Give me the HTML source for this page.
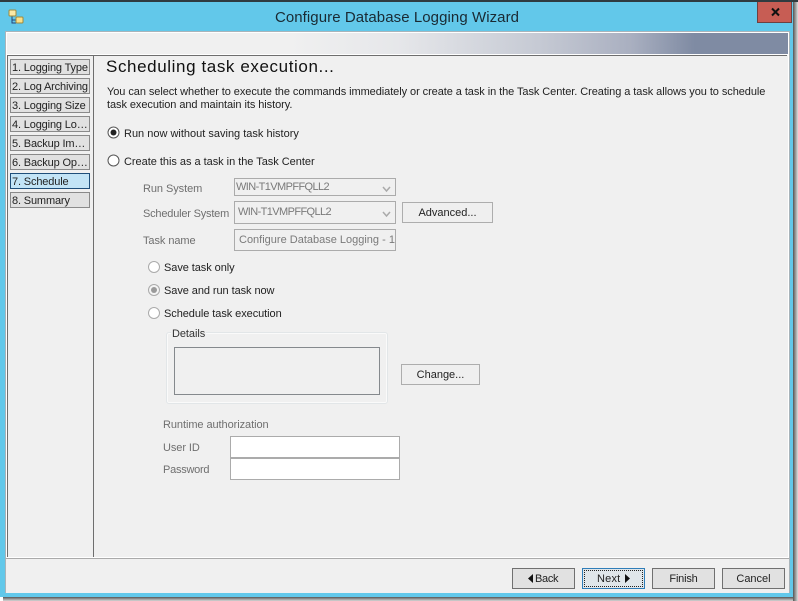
<!DOCTYPE html>
<html><head><meta charset="utf-8"><style>
html,body{margin:0;padding:0;width:798px;height:601px;overflow:hidden;background:#fff}
*{box-sizing:border-box}
body{font-family:"Liberation Sans",sans-serif;font-size:11px;color:#111;position:relative}
div,span.t{position:absolute;white-space:nowrap}
.t{line-height:14px;height:14px;letter-spacing:-.07px}
.g{color:#6f6f6f}
.nav{left:10px;width:80px;height:16px;background:#e1e1e1;border:1px solid #8a8a8a;line-height:16px;padding-left:1px;color:#222;overflow:hidden;letter-spacing:-.15px}
.inp{border:1px solid #ababab;background:#f0f0f0;color:#7a7a7a;line-height:16px;padding-left:2px;letter-spacing:-.6px}
.btn{background:#efefef;border:1px solid #adadad;text-align:center;color:#222}
.bb{top:568px;width:63px;height:21px;background:#e1e1e1;border:1px solid #707070;line-height:20px;text-align:center;color:#222}
svg{position:absolute;overflow:visible}
</style></head><body>
<div style="left:0;top:0;width:798px;height:597px;background:#62c8ea"></div>
<div style="left:0;top:0;width:798px;height:2px;background:#2f3b40"></div>
<div style="left:3px;top:597px;width:795px;height:4px;background:linear-gradient(#555,#ccc 90%)"></div>
<div style="left:793px;top:2px;width:5px;height:599px;background:linear-gradient(90deg,#555,#ddd)"></div>
<svg style="left:8px;top:9px" width="16" height="16" viewBox="0 0 16 16"><path d="M4 6V14H8M4 11H8" stroke="#26457a" fill="none"/><rect x="1" y="1" width="7" height="6" rx="1" fill="#fbe9a6" stroke="#a08a3c"/><rect x="8" y="8" width="7" height="6" rx="1" fill="#fbe08a" stroke="#a08a3c"/></svg>
<div style="left:0;top:9px;width:794px;text-align:center;font-size:15px;line-height:18px;color:#1a2a33;letter-spacing:.07px">Configure Database Logging Wizard</div>
<div style="left:757px;top:2px;width:35px;height:21px;background:#c75d54;border:1px solid #6e4040;border-top:0;text-align:center"><svg style="left:13px;top:6px" width="9" height="8" viewBox="0 0 9 8"><path d="M1 0.5L8 7.5M8 0.5L1 7.5" stroke="#111" stroke-width="2"/></svg></div>

<div style="left:5px;top:31px;width:785px;height:562px;background:#f0f0f0;border:1px solid #a9b4ba;border-bottom:0;border-right:0"></div>
<div style="left:6px;top:32px;width:783px;height:1px;background:#fff"></div>
<div style="left:6px;top:32px;width:1px;height:525px;background:#fff"></div>
<div style="left:788px;top:32px;width:1px;height:526px;background:#fff"></div>
<div style="left:789px;top:31px;width:1px;height:562px;background:#a9b4ba"></div>
<div style="left:7px;top:33px;width:781px;height:21px;background:linear-gradient(90deg,#f0f0f0 0,#f0f0f0 36%,#e6e7ea 50%,#c6cad4 68%,#a9afc0 80%,#7f8ba3 88%,#7f8ba3 100%)"></div>
<div style="left:7px;top:54px;width:781px;height:1px;background:#fff"></div>
<div style="left:7px;top:55px;width:780px;height:1px;background:#6e6e6e"></div>
<div style="left:7px;top:55px;width:1px;height:502px;background:#6e6e6e"></div>
<div style="left:93px;top:55px;width:1px;height:502px;background:#6e6e6e"></div>
<div style="left:6px;top:557px;width:783px;height:1px;background:#fff"></div>
<div style="left:6px;top:558px;width:783px;height:1px;background:#aaa"></div>

<div class="nav" style="top:59px">1. Logging Type</div>
<div class="nav" style="top:78px">2. Log Archiving</div>
<div class="nav" style="top:97px">3. Logging Size</div>
<div class="nav" style="top:116px">4. Logging Lo…</div>
<div class="nav" style="top:135px">5. Backup Im…</div>
<div class="nav" style="top:154px">6. Backup Op…</div>
<div class="nav" style="top:173px;background:#c3e4f6;border:1px solid #1f4e79">7. Schedule</div>
<div class="nav" style="top:192px">8. Summary</div>

<div style="left:106px;top:57px;font-size:17px;line-height:20px;color:#111;letter-spacing:.6px">Scheduling task execution...</div>
<div class="t" style="left:107px;top:85px;color:#222">You can select whether to execute the commands immediately or create a task in the Task Center. Creating a task allows you to schedule</div>
<div class="t" style="left:107px;top:98px;color:#222">task execution and maintain its history.</div>

<svg style="left:107px;top:126px" width="14" height="14"><circle cx="6.5" cy="6.5" r="5.5" fill="#fff" stroke="#555"/><circle cx="6.5" cy="6.5" r="3" fill="#222"/></svg>
<div class="t" style="left:124px;top:127px;color:#222;letter-spacing:0">Run now without saving task history</div>
<svg style="left:107px;top:154px" width="14" height="14"><circle cx="6.5" cy="6.5" r="5.5" fill="#fff" stroke="#555"/></svg>
<div class="t" style="left:124px;top:155px;color:#222;letter-spacing:-.03px">Create this as a task in the Task Center</div>

<div class="t g" style="left:143px;top:182px">Run System</div>
<div class="inp" style="left:234px;top:178px;width:162px;height:18px;line-height:17px;padding-left:1px">WIN-T1VMPFFQLL2</div>
<svg style="left:382px;top:186px" width="9" height="6"><path d="M1 1L4.5 5L8 1" stroke="#aaa" stroke-width="1.5" fill="none"/></svg>
<div class="t g" style="left:143px;top:207px;letter-spacing:-.2px">Scheduler System</div>
<div class="inp" style="left:234px;top:201px;width:162px;height:23px;line-height:21px;padding-left:3px">WIN-T1VMPFFQLL2</div>
<svg style="left:382px;top:211px" width="9" height="6"><path d="M1 1L4.5 5L8 1" stroke="#aaa" stroke-width="1.5" fill="none"/></svg>
<div class="btn" style="left:402px;top:202px;width:91px;height:21px;line-height:20px">Advanced...</div>
<div class="t g" style="left:143px;top:234px">Task name</div>
<div class="inp" style="left:234px;top:229px;width:162px;height:22px;line-height:21px;padding-left:4px;overflow:hidden;letter-spacing:0">Configure Database Logging - 1</div>

<svg style="left:148px;top:261px" width="13" height="13"><circle cx="6" cy="6" r="5.5" fill="#fff" stroke="#aaa"/></svg>
<div class="t" style="left:164px;top:261px;color:#222">Save task only</div>
<svg style="left:148px;top:284px" width="13" height="13"><circle cx="6" cy="6" r="5.5" fill="#f4f4f4" stroke="#aaa"/><circle cx="6" cy="6" r="3" fill="#9a9a9a"/></svg>
<div class="t" style="left:164px;top:284px;color:#222">Save and run task now</div>
<svg style="left:148px;top:307px" width="13" height="13"><circle cx="6" cy="6" r="5.5" fill="#fff" stroke="#aaa"/></svg>
<div class="t" style="left:164px;top:307px;color:#222">Schedule task execution</div>

<div style="left:166px;top:332px;width:222px;height:72px;border:1px solid #e2e6e8;border-radius:3px;box-shadow:0 0 0 1px #fafafa inset"></div>
<div class="t" style="left:171px;top:327px;background:#f0f0f0;padding:0 1px;color:#333">Details</div>
<div style="left:174px;top:347px;width:206px;height:48px;border:1px solid #85898d"></div>
<div class="btn" style="left:401px;top:364px;width:79px;height:21px;line-height:20px">Change...</div>

<div class="t g" style="left:163px;top:418px">Runtime authorization</div>
<div class="t g" style="left:163px;top:441px">User ID</div>
<div style="left:230px;top:436px;width:170px;height:22px;background:#fff;border:1px solid #ababab"></div>
<div class="t g" style="left:163px;top:463px;letter-spacing:-.25px">Password</div>
<div style="left:230px;top:458px;width:170px;height:22px;background:#fff;border:1px solid #ababab"></div>

<div class="bb" style="left:512px"><svg style="left:15px;top:5px" width="5" height="9"><path d="M5 0V9L0 4.5Z" fill="#111"/></svg><span style="position:absolute;left:22px;top:0;letter-spacing:-.3px">Back</span></div>
<div class="bb" style="left:582px;background:#e0e6ea;border:1px solid #2f7db8"><div style="left:1px;top:1px;width:59px;height:17px;border:1px dotted #222"></div><span style="position:absolute;left:14px;top:0;letter-spacing:.2px">Next</span><svg style="left:42px;top:5px" width="5" height="9"><path d="M0 0V9L5 4.5Z" fill="#111"/></svg></div>
<div class="bb" style="left:652px;letter-spacing:-.2px">Finish</div>
<div class="bb" style="left:722px">Cancel</div>
</body></html>
